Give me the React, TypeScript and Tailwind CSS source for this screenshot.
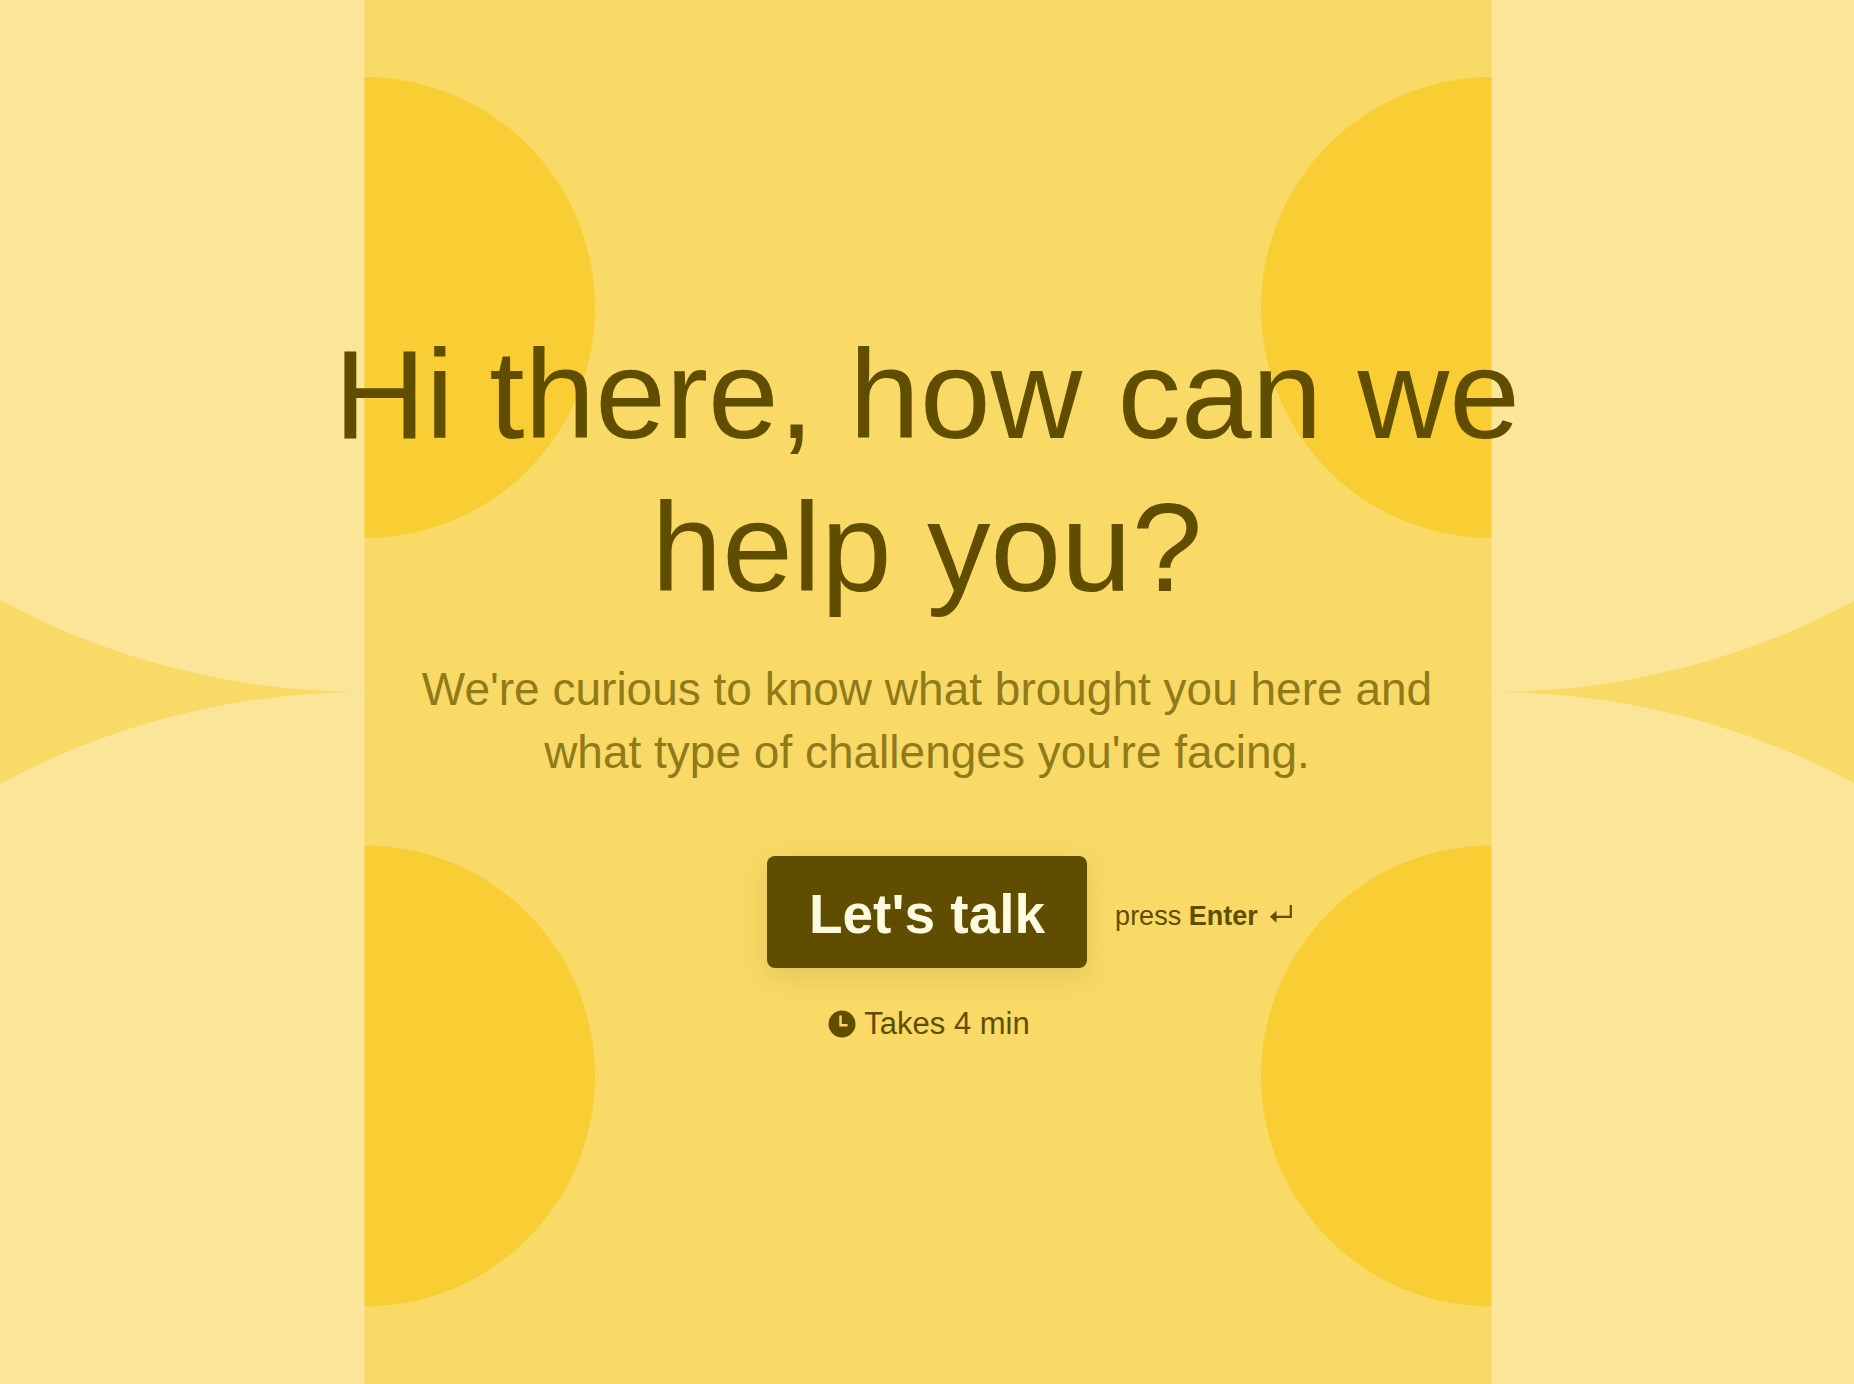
function Backdrop() {
  return (
    <svg
      className="absolute inset-0 h-full w-full"
      viewBox="0 0 1854 1384"
      preserveAspectRatio="xMidYMid slice"
      aria-hidden="true"
    >
      <defs>
        <clipPath id="left-side">
          <rect x="0" y="0" width="364.5" height="1384" />
        </clipPath>
        <clipPath id="right-side">
          <rect x="1491.5" y="0" width="362.5" height="1384" />
        </clipPath>
        <clipPath id="center">
          <rect x="364.5" y="0" width="1127" height="1384" />
        </clipPath>
      </defs>
      <g fill="#fbe599" clipPath="url(#left-side)">
        <circle cx="364.5" cy="-76" r="768" />
        <circle cx="364.5" cy="1460" r="768" />
      </g>
      <g fill="#fbe599" clipPath="url(#right-side)">
        <circle cx="1491.5" cy="-76" r="768" />
        <circle cx="1491.5" cy="1460" r="768" />
      </g>
      <g fill="#f9ce34" clipPath="url(#center)">
        <circle cx="364.5" cy="307.5" r="230.5" />
        <circle cx="364.5" cy="1076" r="230.5" />
        <circle cx="1491.5" cy="307.5" r="230.5" />
        <circle cx="1491.5" cy="1076" r="230.5" />
      </g>
    </svg>
  );
}

function ClockIcon() {
  return (
    <svg className="size-7" viewBox="0 0 28 28" fill="none" aria-hidden="true">
      <circle cx="14" cy="14" r="13.5" fill="#614d00" />
      <path d="M12.5 5.5v9.8h7" stroke="#f9da66" strokeWidth="2.4" />
    </svg>
  );
}

function EnterIcon() {
  return (
    <svg className="mb-1 h-[18px] w-[22px]" viewBox="0 0 22 18" fill="none" aria-hidden="true">
      <path d="M20.8 0v11.8H5" stroke="#614d00" strokeWidth="2.2" />
      <path d="M0 11.8l6.5-6v12z" fill="#614d00" />
    </svg>
  );
}

export default function App() {
  return (
    <main className="relative flex min-h-screen flex-col overflow-hidden bg-[#f9da66] font-['Liberation_Sans',Arial,sans-serif] text-[#614d00]">
      <Backdrop />

      <section className="relative flex flex-1 flex-col items-center justify-center pb-[18px] text-center">
        <h1 className="max-w-[1240px] text-[127px] leading-[153px]">
          Hi there, how can we help you?
        </h1>

        <p className="mt-[34px] max-w-[1040px] text-[46px] leading-[63px] text-[#907a1a]">
          We're curious to know what brought you here and what type of challenges you're facing.
        </p>

        <div className="mt-[72px] grid w-full grid-cols-[1fr_auto_1fr] items-center">
          <button
            type="button"
            className="col-start-2 h-28 rounded-lg bg-[#614d00] px-[42px] pt-1 text-[55px] font-bold text-[#fffbe0] shadow-[0_8px_28px_rgba(97,77,0,0.15)]"
          >
            Let's talk
          </button>
          <div className="flex items-center gap-3 pt-2 pl-7 text-[27px] leading-8">
            <span>
              press <strong>Enter</strong>
            </span>
            <EnterIcon />
          </div>
        </div>

        <div className="mt-8 flex items-center gap-2 pl-1 text-[31px] leading-[48px]">
          <ClockIcon />
          <span>Takes 4 min</span>
        </div>
      </section>
    </main>
  );
}
